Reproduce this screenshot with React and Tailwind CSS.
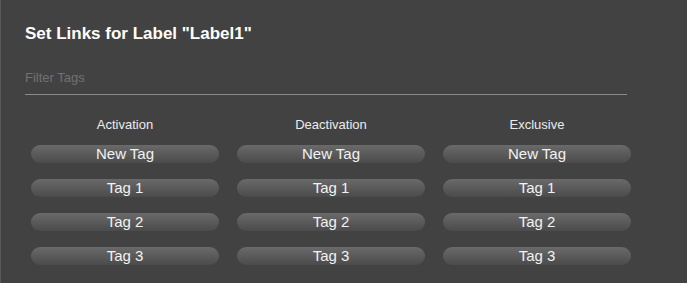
import React from 'react';

const COLUMNS = ['Activation', 'Deactivation', 'Exclusive'];
const TAGS = ['New Tag', 'Tag 1', 'Tag 2', 'Tag 3'];

function TagButton({ label }) {
  return (
    <button className="w-[188px] h-[18px] rounded-full bg-gradient-to-b from-[#6a6a6a] to-[#4b4b4b] text-[15px] leading-[18px] text-[#f2f2f2]">
      {label}
    </button>
  );
}

export default function App() {
  return (
    <div
      className="w-[687px] h-[283px] bg-[#424242] border-l border-[#5a5a5a] pl-[24px] pt-[24px] flex flex-col"
      style={{ fontFamily: '"Liberation Sans", Arial, sans-serif' }}
    >
      <h1 className="text-[17px] leading-[20px] font-bold text-white">
        Set Links for Label "Label1"
      </h1>

      <div className="mt-[26px] w-[602px] border-b border-[#8a8a8a] pb-[8px]">
        <input
          placeholder="Filter Tags"
          className="block w-full bg-transparent text-[13px] leading-[16px] h-[16px] text-white placeholder:text-[#717171] outline-none"
        />
      </div>

      <div className="mt-[22px] ml-[6px] flex gap-[18px]">
        {COLUMNS.map((col) => (
          <div key={col} className="w-[188px] flex flex-col items-center">
            <div className="text-[13px] leading-[16px] text-[#ececec]">{col}</div>
            <div className="mt-[12px] flex flex-col gap-[16px]">
              {TAGS.map((t) => (
                <TagButton key={t} label={t} />
              ))}
            </div>
          </div>
        ))}
      </div>
    </div>
  );
}
